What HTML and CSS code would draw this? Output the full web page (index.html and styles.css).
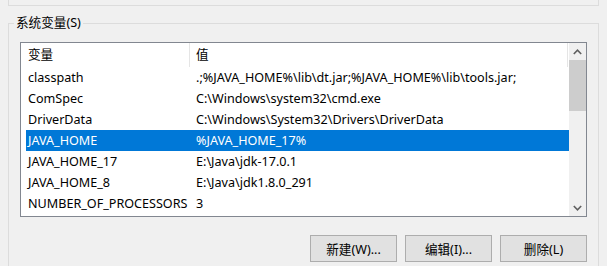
FILE: index.html
```html
<!DOCTYPE html>
<html lang="zh-CN">
<head>
<meta charset="utf-8">
<title>系统变量</title>
<link rel="stylesheet" href="styles.css">
</head>
<body>
<div class="prev-group"></div>
<div class="group">
  <div class="legend">系统变量(S)</div>
  <div class="list">
    <div class="list-main">
      <div class="header">
        <div class="hcell hcell-name">变量</div>
        <div class="hcell hcell-value">值</div>
      </div>
      <div class="row"><div class="cell">classpath</div><div class="cell cell-value">.;%JAVA_HOME%\lib\dt.jar;%JAVA_HOME%\lib\tools.jar;</div></div>
      <div class="row"><div class="cell">ComSpec</div><div class="cell cell-value">C:\Windows\system32\cmd.exe</div></div>
      <div class="row"><div class="cell">DriverData</div><div class="cell cell-value">C:\Windows\System32\Drivers\DriverData</div></div>
      <div class="row selected"><div class="cell">JAVA_HOME</div><div class="cell cell-value">%JAVA_HOME_17%</div></div>
      <div class="row"><div class="cell">JAVA_HOME_17</div><div class="cell cell-value">E:\Java\jdk-17.0.1</div></div>
      <div class="row"><div class="cell">JAVA_HOME_8</div><div class="cell cell-value">E:\Java\jdk1.8.0_291</div></div>
      <div class="row"><div class="cell">NUMBER_OF_PROCESSORS</div><div class="cell cell-value">3</div></div>
    </div>
    <div class="scrollbar">
      <div class="arrow">
        <svg width="9" height="6" viewBox="0 0 9 6"><polyline points="0.8,5 4.5,1.2 8.2,5" fill="none" stroke="#606060" stroke-width="1.6"/></svg>
      </div>
      <div class="thumb"></div>
      <div class="track"></div>
      <div class="arrow">
        <svg width="9" height="6" viewBox="0 0 9 6"><polyline points="0.8,1 4.5,4.8 8.2,1" fill="none" stroke="#606060" stroke-width="1.6"/></svg>
      </div>
    </div>
  </div>
  <div class="buttons">
    <button class="btn">新建(W)...</button>
    <button class="btn">编辑(I)...</button>
    <button class="btn">删除(L)</button>
  </div>
</div>
</body>
</html>
```
FILE: styles.css
```css
html, body {
  margin: 0;
  padding: 0;
}
body {
  background: #f0f0f0;
  font-family: "Segoe UI", "Noto Sans", "Noto Sans CJK SC", sans-serif;
  font-size: 12.6px;
  color: #000;
  overflow: hidden;
  height: 266px;
}
.prev-group {
  margin: 0 8px;
  height: 5px;
  border: 1px solid #dcdcdc;
  border-top: none;
}
.group {
  margin: 17px 8px 0;
  border: 1px solid #dcdcdc;
  border-bottom: none;
  padding: 0 11px;
  height: 242px;
}
.legend {
  width: fit-content;
  height: 16px;
  line-height: 16px;
  margin: -9px 0 0 -6px;
  padding: 0 2px;
  background: #f0f0f0;
}
.list {
  margin-top: 11px;
  border: 1px solid #828790;
  background: #fff;
  height: 173px;
  display: flex;
  overflow: hidden;
}
.list-main {
  flex: 1;
  min-width: 0;
}
.header {
  display: grid;
  grid-template-columns: 169px 1fr;
  height: 24px;
  margin-right: 1px;
}
.hcell {
  line-height: 24px;
  white-space: nowrap;
}
.hcell-name {
  padding-left: 7px;
  border-right: 1px solid #e5e5e5;
}
.hcell-value {
  padding-left: 6px;
  border-right: 1px solid #e5e5e5;
}
.row {
  display: grid;
  grid-template-columns: 164px 1fr;
  height: 21px;
  line-height: 21px;
  margin-left: 5px;
  white-space: nowrap;
}
.row .cell {
  padding-left: 2px;
  overflow: hidden;
}
.row .cell-value {
  padding-left: 6px;
}
.row.selected {
  background: #0078d7;
  color: #fff;
}
.scrollbar {
  width: 17px;
  background: #f0f0f0;
  display: flex;
  flex-direction: column;
}
.arrow {
  height: 17px;
  display: flex;
  align-items: center;
  justify-content: center;
}
.thumb {
  height: 51px;
  background: #cdcdcd;
}
.track {
  flex: 1;
}
.buttons {
  display: flex;
  justify-content: flex-end;
  gap: 8px;
  margin-top: 18px;
}
.btn {
  width: 87px;
  height: 27px;
  background: #e1e1e1;
  border: 1px solid #adadad;
  font-family: inherit;
  font-size: 12.6px;
  color: #000;
  padding: 0;
  border-radius: 0;
}
```
